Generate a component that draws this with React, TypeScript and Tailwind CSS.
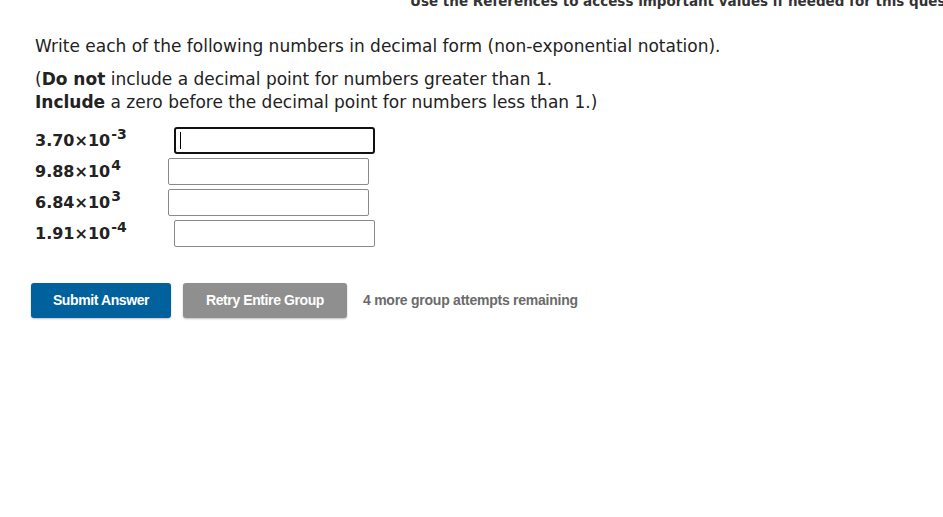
const ROWS = [
  { mant: "3.70", exp: "-3", focused: true },
  { mant: "9.88", exp: "4", focused: false },
  { mant: "6.84", exp: "3", focused: false },
  { mant: "1.91", exp: "-4", focused: false },
];

const VERDANA = "font-['Verdana','DejaVu_Sans',sans-serif]";
const ARIAL = "font-['Arial','Liberation_Sans',sans-serif]";

function Row({ mant, exp, focused }: { mant: string; exp: string; focused: boolean }) {
  return (
    <div className="flex items-center h-[31px]">
      <span className={`${VERDANA} font-bold text-[16px] text-[#222] leading-none`}>
        {mant}×10<span className="text-[14px] ml-[1px] relative -top-[7px]">{exp}</span>
      </span>
      <div
        className={
          focused
            ? "ml-[47px] w-[201px] h-[27px] border-2 border-[#111] rounded-[3px] flex items-center pl-[4px]"
            : "ml-[47px] w-[201px] h-[27px] border border-[#8a8a8a] rounded-[2px]"
        }
      >
        {focused && <div className="w-px h-[17px] bg-black" />}
      </div>
    </div>
  );
}

export default function App() {
  return (
    <div className="w-[943px] h-[517px] overflow-hidden bg-white relative">
      <div className={`${VERDANA} font-bold text-[13.5px] text-[#333] whitespace-nowrap ml-[410px] -mt-[7px] leading-[16px]`}>
        Use the References to access important values if needed for this question.
      </div>
      <div className={`${VERDANA} text-[17px] text-[#222] pl-[35px]`}>
        <p className="mt-[26px] leading-[23px]">
          Write each of the following numbers in decimal form (non-exponential notation).
        </p>
        <p className="mt-[10px] leading-[23px]">
          (<b>Do not</b> include a decimal point for numbers greater than 1.
          <br />
          <b>Include</b> a zero before the decimal point for numbers less than 1.)
        </p>
        <div className="mt-[11px] flex flex-col">
          {ROWS.map((r) => (
            <Row key={r.mant} {...r} />
          ))}
        </div>
      </div>
      <div className={`${ARIAL} flex items-center gap-[12px] pl-[31px] mt-[34px]`}>
        <button className="w-[140px] h-[35px] rounded-[3px] bg-[#00619c] text-white font-bold text-[14px] tracking-[-0.4px] shadow-[0_1px_2px_rgba(0,0,0,0.25)]">
          Submit Answer
        </button>
        <button className="w-[164px] h-[35px] rounded-[3px] bg-[#8f8f8f] text-white font-bold text-[14px] tracking-[-0.4px] shadow-[0_1px_2px_rgba(0,0,0,0.25)]">
          Retry Entire Group
        </button>
        <span className="ml-[4px] text-[#6b6b6b] font-bold text-[14px] tracking-[-0.25px]">
          4 more group attempts remaining
        </span>
      </div>
    </div>
  );
}
